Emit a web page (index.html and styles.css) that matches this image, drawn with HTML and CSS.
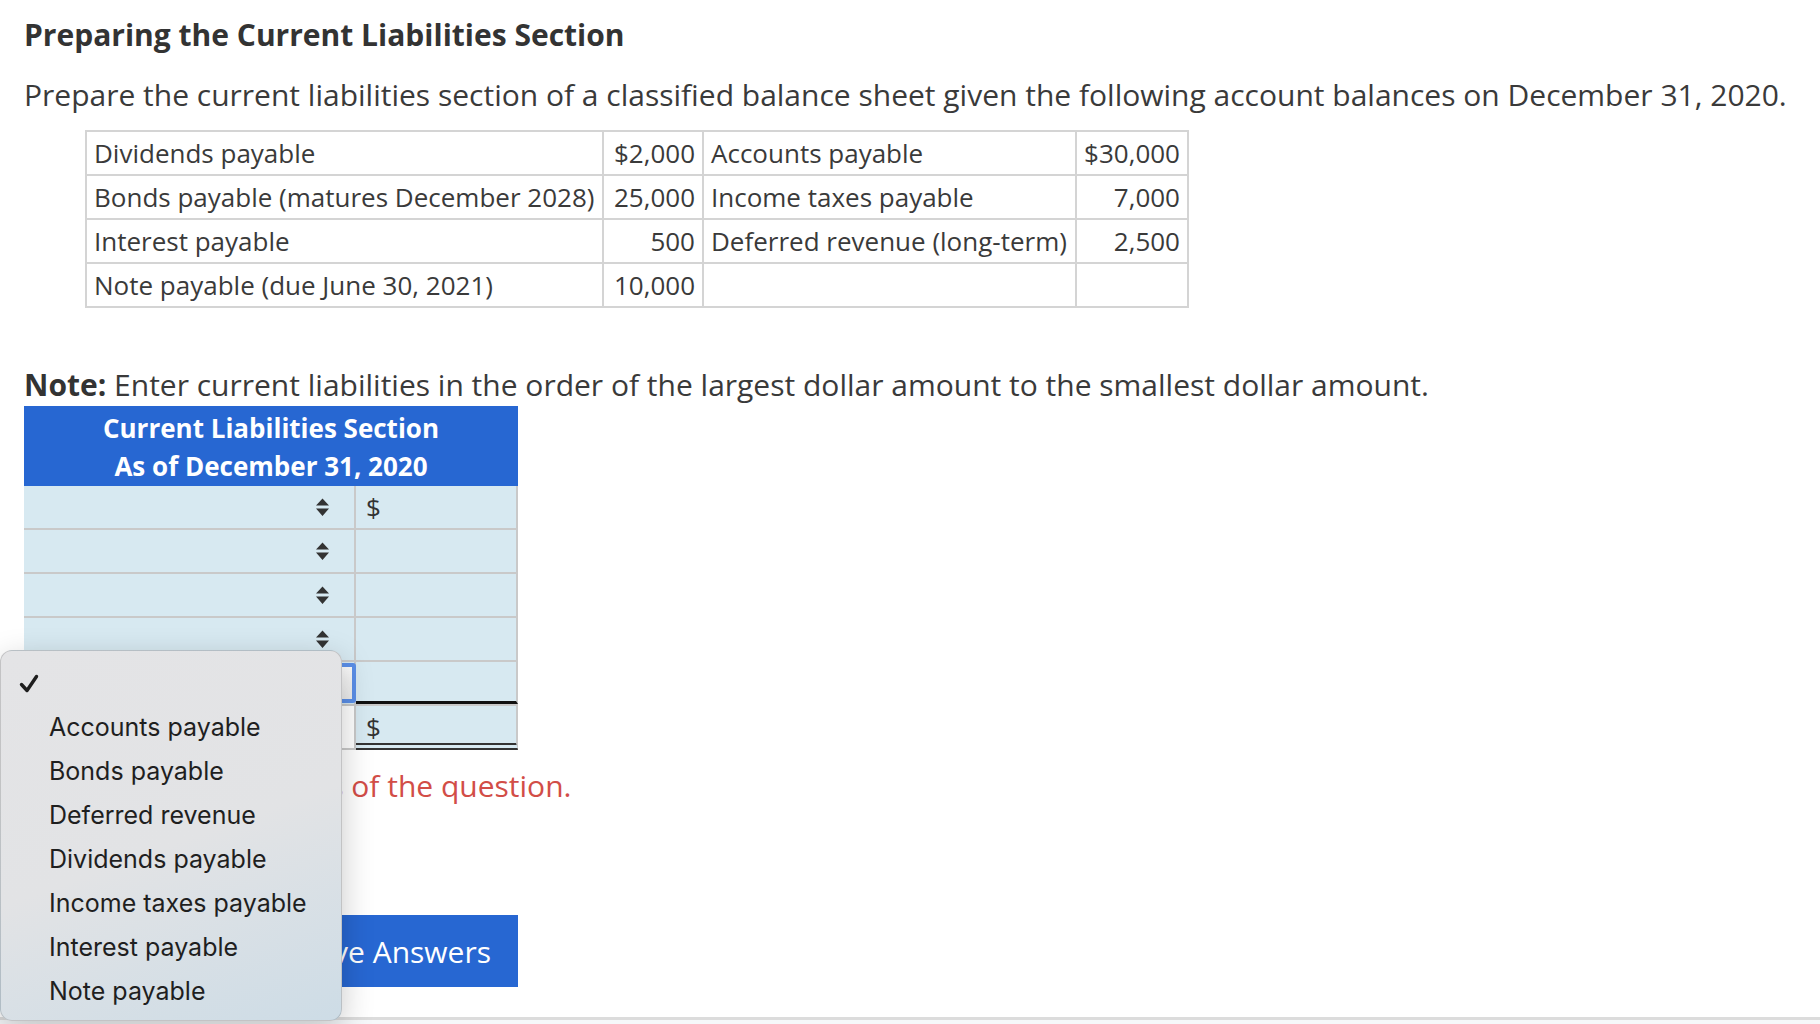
FILE: index.html
```html
<!DOCTYPE html>
<html lang="en">
<head>
<meta charset="utf-8">
<title>Preparing the Current Liabilities Section</title>
<link rel="stylesheet" href="styles.css">
</head>
<body>
<div class="page">
  <h1 class="title">Preparing the Current Liabilities Section</h1>
  <p class="intro">Prepare the current liabilities section of a classified balance sheet given the following account balances on December 31, 2020.</p>

  <div class="balances">
    <div class="cell name">Dividends payable</div>
    <div class="cell amt">$2,000</div>
    <div class="cell name">Accounts payable</div>
    <div class="cell amt">$30,000</div>

    <div class="cell name">Bonds payable (matures December 2028)</div>
    <div class="cell amt">25,000</div>
    <div class="cell name">Income taxes payable</div>
    <div class="cell amt">7,000</div>

    <div class="cell name">Interest payable</div>
    <div class="cell amt">500</div>
    <div class="cell name">Deferred revenue (long-term)</div>
    <div class="cell amt">2,500</div>

    <div class="cell name">Note payable (due June 30, 2021)</div>
    <div class="cell amt">10,000</div>
    <div class="cell name"></div>
    <div class="cell amt"></div>
  </div>

  <p class="note"><b>Note:</b> Enter current liabilities in the order of the largest dollar amount to the smallest dollar amount.</p>

  <div class="worksheet">
    <div class="ws-head">Current Liabilities Section<br>As of December 31, 2020</div>

    <div class="ws-row">
      <div class="ws-label"><svg class="arrows" viewBox="0 0 15 19" width="15" height="19"><path d="M1 7.5 L7.5 0.5 L14 7.5 Z M1 10.5 L14 10.5 L7.5 18 Z" fill="#333"/></svg></div>
      <div class="ws-amt">$</div>
    </div>
    <div class="ws-row">
      <div class="ws-label"><svg class="arrows" viewBox="0 0 15 19" width="15" height="19"><path d="M1 7.5 L7.5 0.5 L14 7.5 Z M1 10.5 L14 10.5 L7.5 18 Z" fill="#333"/></svg></div>
      <div class="ws-amt"></div>
    </div>
    <div class="ws-row">
      <div class="ws-label"><svg class="arrows" viewBox="0 0 15 19" width="15" height="19"><path d="M1 7.5 L7.5 0.5 L14 7.5 Z M1 10.5 L14 10.5 L7.5 18 Z" fill="#333"/></svg></div>
      <div class="ws-amt"></div>
    </div>
    <div class="ws-row">
      <div class="ws-label"><svg class="arrows" viewBox="0 0 15 19" width="15" height="19"><path d="M1 7.5 L7.5 0.5 L14 7.5 Z M1 10.5 L14 10.5 L7.5 18 Z" fill="#333"/></svg></div>
      <div class="ws-amt"></div>
    </div>
    <div class="ws-row">
      <div class="ws-label"><div class="focus-select"></div></div>
      <div class="ws-amt single"></div>
    </div>
    <div class="ws-row total">
      <div class="ws-label blank"></div>
      <div class="ws-amt double">$</div>
    </div>
  </div>

  <p class="warn">Please answer all parts of the question.</p>

  <div class="actions">
    <button class="save" type="button">Save Answers</button>
  </div>
</div>
<div class="footer-line"></div>

<div class="menu">
  <div class="menu-item checked"><svg class="check" viewBox="0 0 20 20" width="20" height="20"><path d="M2.5 10.5 L8 16.5 L17.5 2.5" fill="none" stroke="#1e1e1e" stroke-width="3.4" stroke-linecap="round" stroke-linejoin="round"/></svg></div>
  <div class="menu-item">Accounts payable</div>
  <div class="menu-item">Bonds payable</div>
  <div class="menu-item">Deferred revenue</div>
  <div class="menu-item">Dividends payable</div>
  <div class="menu-item">Income taxes payable</div>
  <div class="menu-item">Interest payable</div>
  <div class="menu-item">Note payable</div>
</div>
</body>
</html>
```

FILE: styles.css
```css
html, body {
  margin: 0;
  padding: 0;
  background: #ffffff;
}

body {
  font-family: "Open Sans", "DejaVu Sans", sans-serif;
  color: #333333;
  font-size: 30px;
  overflow: hidden;
  height: 1024px;
  position: relative;
}

.page {
  padding-left: 24px;
}

.title {
  margin: 0;
  padding-top: 17px;
  font-size: 30px;
  line-height: 36px;
  font-weight: 700;
  color: #333333;
}

.intro {
  margin: 24px 0 0 0;
  line-height: 36px;
  color: #3a3a3a;
  white-space: nowrap;
}

.balances {
  box-sizing: border-box;
  margin: 17px 0 0 61px;
  width: 1104px;
  display: grid;
  grid-template-columns: 515px 98px 371px 110px;
  grid-auto-rows: 42px;
  gap: 2px;
  padding: 2px;
  background: #d4d4d4;
  font-size: 26px;
}

.balances .cell {
  background: #ffffff;
  line-height: 42px;
  color: #3a3a3a;
  white-space: nowrap;
}

.balances .name {
  padding-left: 7px;
}

.balances .amt {
  text-align: right;
  padding-right: 7px;
}

.note {
  margin: 59px 0 0 0;
  line-height: 36px;
  color: #3a3a3a;
  white-space: nowrap;
}

.note b {
  color: #333333;
}

.worksheet {
  margin-top: 3px;
  width: 494px;
}

.ws-head {
  background: #2767d2;
  color: #ffffff;
  font-weight: 700;
  font-size: 26px;
  line-height: 38px;
  text-align: center;
  padding: 3px 0 1px 0;
}

.ws-row {
  display: flex;
  height: 42px;
  border-bottom: 2px solid #c9c9c9;
}

.ws-label {
  width: 306px;
  padding-right: 24px;
  background: #d7e9f1;
  border-right: 2px solid #c9c9c9;
  display: flex;
  align-items: center;
  justify-content: flex-end;
}

.ws-amt {
  flex: 1;
  background: #d7e9f1;
  border-right: 2px solid #c9c9c9;
  padding-left: 10px;
  line-height: 42px;
  font-size: 26px;
  color: #333333;
}

.arrows {
  display: block;
}

.focus-select {
  box-sizing: border-box;
  align-self: flex-start;
  width: 326px;
  margin: 1px -26px 0 0;
  height: 40px;
  border: 4px solid #5b8fe8;
  border-radius: 3px;
  background: linear-gradient(180deg, #fbfbfb 0%, #ececec 100%);
}

.ws-amt.single {
  border-bottom: 3px solid #111111;
  height: 39px;
  margin-bottom: -1px;
}

.ws-row.total {
  height: 44px;
  border-bottom: none;
}

.ws-label.blank {
  background: #ffffff;
  border-bottom: 2px solid #c9c9c9;
  height: 42px;
}

.ws-amt.double {
  border-bottom: 7px double #333333;
  height: 37px;
}

.warn {
  margin: 18px 0 0 0;
  line-height: 36px;
  color: #d24d47;
  white-space: nowrap;
}

.actions {
  width: 494px;
  display: flex;
  justify-content: flex-end;
  margin-top: 111px;
}

.save {
  height: 72px;
  padding: 0 27px;
  border: none;
  background: #2767d2;
  color: #ffffff;
  font-family: "Open Sans", "DejaVu Sans", sans-serif;
  font-size: 30px;
}

.footer-line {
  margin-top: 30px;
  border-top: 3px solid #dcdcdc;
  background: #f6f8fa;
  height: 20px;
}

.menu {
  position: absolute;
  left: 0;
  top: 650px;
  width: 342px;
  height: 371px;
  box-sizing: border-box;
  padding-top: 10px;
  border-radius: 12px;
  border: 1px solid rgba(0, 0, 0, 0.14);
  background: linear-gradient(160deg, #e4e4e6 0%, #e2e3e5 52%, #cddce6 100%);
  box-shadow: 0 10px 32px rgba(0, 0, 0, 0.22);
  font-family: Inter, "Liberation Sans", sans-serif;
  font-size: 25px;
  color: #1f1f1f;
}

.menu-item {
  height: 44px;
  line-height: 44px;
  padding-left: 48px;
  white-space: nowrap;
}

.menu-item.checked {
  position: relative;
}

.check {
  position: absolute;
  left: 18px;
  top: 13px;
}
```
